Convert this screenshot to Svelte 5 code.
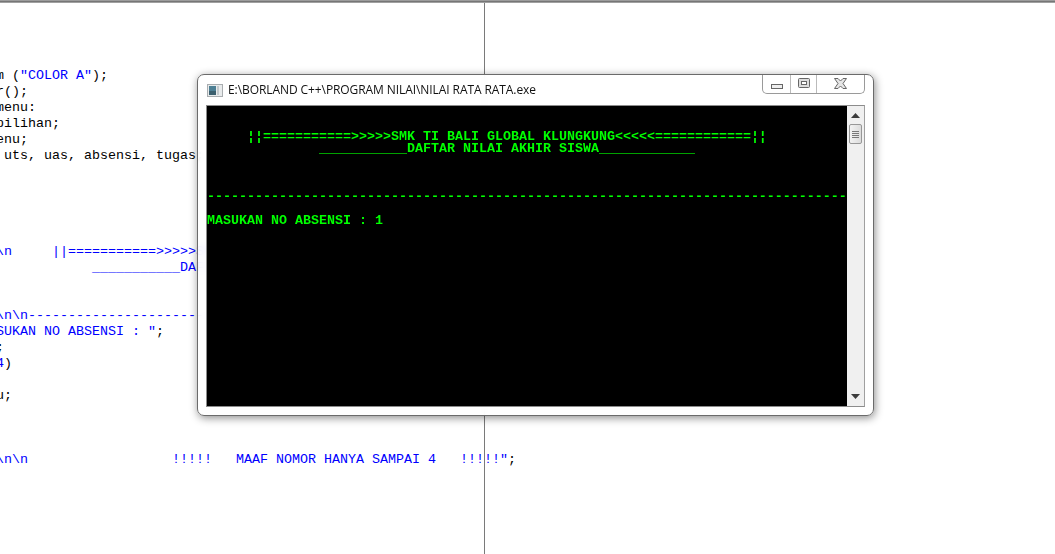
<script>
	const S = true;
	const eq = '='.repeat(11);
	const codeLines = [
		[['m ('], ['"COLOR A"', S], [');']],
		[['r();']],
		[['menu:']],
		[['pilihan;']],
		[['enu;']],
		[[' uts, uas, absensi, tugas;']],
		[],
		[],
		[],
		[],
		[],
		[['\\n     ||' + eq + '>>>>>SMK TI BALI GLOBAL KLUNGKUNG', S]],
		[['            ' + '_'.repeat(11) + 'DAFTAR NILAI AKHIR SISWA', S]],
		[],
		[],
		[['\\n\\n' + '-'.repeat(80), S]],
		[['SUKAN NO ABSENSI : "', S], [';']],
		[[';']],
		[['4', S], [')']],
		[],
		[['u;']],
		[],
		[],
		[],
		[['\\n\\n' + ' '.repeat(18) + '!!!!!   MAAF NOMOR HANYA SAMPAI 4   !!!!!"', S], [';']]
	];

	const consoleText = [
		'',
		'',
		'     ¦¦' + eq + '>>>>>SMK TI BALI GLOBAL KLUNGKUNG<<<<<' + '='.repeat(12) + '¦¦',
		' '.repeat(14) + '_'.repeat(11) + 'DAFTAR NILAI AKHIR SISWA' + '_'.repeat(12),
		'',
		'',
		'',
		'-'.repeat(80),
		'',
		'MASUKAN NO ABSENSI : 1'
	].join('\n');
</script>

<div class="page">
	<div class="topband"></div>
	<div class="editor">
		<div class="pane left">
			<div class="code">
				{#each codeLines as line}
					<div class="line">{#each line as part}<span class:str={part[1]}>{part[0]}</span>{/each}</div>
				{/each}
			</div>
		</div>
		<div class="pane"></div>
	</div>

	<div class="window">
		<div class="titlebar">
			<svg class="appicon" width="16" height="13" viewBox="0 0 16 13">
				<rect x="0.5" y="0.5" width="15" height="12" fill="#e8ebec" stroke="#a9adb0" />
				<rect x="2" y="2" width="7" height="9" fill="#4d7f94" />
				<rect x="2" y="7" width="7" height="4" fill="#3b5f6e" />
				<rect x="10" y="2" width="2" height="9" fill="#c3c9cc" />
			</svg>
			<span class="title">E:\BORLAND C++\PROGRAM NILAI\NILAI RATA RATA.exe</span>
			<div class="controls">
				<div class="ctl min">
					<svg width="12" height="5" viewBox="0 0 12 5"><rect x="0.5" y="0.5" width="11" height="4" fill="#eee" stroke="#666" /></svg>
				</div>
				<div class="ctl max">
					<svg width="12" height="10" viewBox="0 0 12 10">
						<rect x="0.5" y="0.5" width="11" height="9" rx="1" fill="#ddd" stroke="#666" />
						<rect x="3.5" y="3.5" width="5" height="3" fill="#fff" stroke="#666" />
					</svg>
				</div>
				<div class="ctl close">
					<svg width="13" height="11" viewBox="0 0 13 11">
						<path d="M.5 .5h3.500L6.500 3 9 .5h3.500L9 5.500l3.500 5H9L6.500 8 4 10.500H.5L4 5.500Z" fill="#e6e6e6" stroke="#666" />
					</svg>
				</div>
			</div>
		</div>
		<div class="client">
			<pre class="console">{consoleText}</pre>
			<div class="scrollbar">
				<svg class="arrow" width="9" height="5" viewBox="0 0 9 5"><path d="M4.500 0 9 5H0Z" fill="#3c3c3c" /></svg>
				<div class="thumb">
					<span></span><span></span><span></span><span></span>
				</div>
				<div class="track"></div>
				<svg class="arrow" width="9" height="5" viewBox="0 0 9 5"><path d="M0 0H9L4.500 5Z" fill="#3c3c3c" /></svg>
			</div>
		</div>
	</div>
</div>

<style>
	:global(body) {
		background: #fff;
	}

	.page {
		position: relative;
		width: 1055px;
		height: 554px;
		overflow: hidden;
		background: #fff;
		display: flex;
		flex-direction: column;
	}

	.topband {
		height: 3px;
		box-sizing: border-box;
		background: #767676;
		border-top: 1px solid #9c9c9c;
		border-bottom: 1px solid #a0a0a0;
	}

	.editor {
		flex: 1;
		display: flex;
		min-height: 0;
	}

	.pane {
		flex: 1;
	}

	.left {
		flex: none;
		width: 484px;
		border-right: 1px solid #7a7a7a;
	}

	.code {
		margin-left: -4px;
		padding-top: 65px;
		font: 13.33px/16px "Liberation Mono", monospace;
		color: #000;
		white-space: pre;
	}

	.line {
		height: 16px;
	}

	.str {
		color: #0000ff;
	}

	.window {
		position: absolute;
		left: 197px;
		top: 74px;
		width: 677px;
		height: 342px;
		box-sizing: border-box;
		border: 1px solid #6b6b6b;
		border-radius: 7px;
		background: rgba(255, 255, 255, 0.9);
		backdrop-filter: blur(4px);
		box-shadow: 1px 2px 9px rgba(0, 0, 0, 0.45);
		padding: 0 8px 8px;
		display: flex;
		flex-direction: column;
	}

	.titlebar {
		height: 30px;
		display: flex;
		align-items: flex-start;
		flex: none;
	}

	.appicon {
		margin: 9px 5px 0 1px;
	}

	.title {
		margin-top: 7px;
		font: 12px/16px "Open Sans", sans-serif;
		color: #111;
		letter-spacing: -0.08px;
	}

	.controls {
		margin-left: auto;
		display: flex;
		height: 19px;
		border: 1px solid #9a9a9a;
		border-top: none;
		border-radius: 0 0 5px 5px;
		box-sizing: border-box;
		background: #fff;
	}

	.ctl {
		display: flex;
		align-items: center;
		justify-content: center;
	}

	.min {
		width: 28px;
		border-right: 1px solid #bbb;
		padding-top: 5px;
		box-sizing: border-box;
	}

	.max {
		width: 26px;
		border-right: 1px solid #bbb;
		padding-bottom: 3px;
		box-sizing: border-box;
	}

	.close {
		width: 47px;
		padding-bottom: 1px;
		box-sizing: border-box;
	}

	.client {
		flex: 1;
		display: flex;
		min-height: 0;
		border-top: 1px solid #8c8c8c;
		border-right: 1px solid #a0a0a0;
		border-bottom: 1px solid #8c8c8c;
		border-left: 1px solid #8c8c8c;
	}

	.console {
		flex: 1;
		margin: 0;
		padding-top: 1px;
		background: #000;
		color: #00ff00;
		font: bold 13.33px/12px "Liberation Mono", monospace;
		overflow: hidden;
	}

	.scrollbar {
		width: 17px;
		flex: none;
		background: #f0f0f0;
		display: flex;
		flex-direction: column;
		align-items: center;
		padding: 7px 0;
		box-sizing: border-box;
	}

	.arrow {
		flex: none;
	}

	.thumb {
		flex: none;
		width: 13px;
		height: 20px;
		margin-top: 6px;
		box-sizing: border-box;
		border: 1px solid #979797;
		border-radius: 2px;
		background: linear-gradient(to right, #f2f2f2, #dcdcdc);
		display: flex;
		flex-direction: column;
		align-items: center;
		justify-content: center;
		gap: 1px;
	}

	.thumb span {
		width: 7px;
		height: 1px;
		background: #777;
	}

	.track {
		flex: 1;
	}
</style>
